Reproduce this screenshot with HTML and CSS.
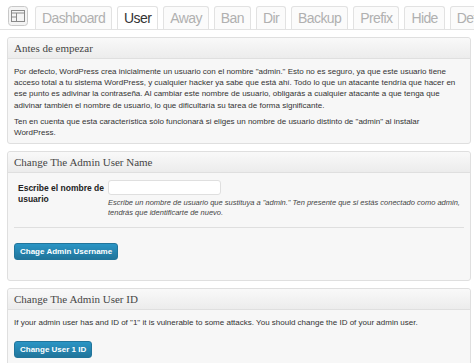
FILE: index.html
```html
<!DOCTYPE html>
<html lang="en">
<head>
    <meta charset="UTF-8">
    <title>User Settings</title>
    <link rel="stylesheet" href="styles.css">
</head>
<body>
    <div class="tabs">
        <span class="tab-icon">
            <svg width="20" height="20" viewBox="0 0 20 20">
                <rect x="0.5" y="0.5" width="19" height="19" rx="3" fill="#f4f4f4" stroke="#c8c8c8"/>
                <rect x="3.5" y="4.5" width="13" height="11" fill="none" stroke="#8a8a8a"/>
                <line x1="3.5" y1="7" x2="16.5" y2="7" stroke="#8a8a8a"/>
                <line x1="8.5" y1="7" x2="8.5" y2="15.5" stroke="#8a8a8a"/>
                <line x1="3.5" y1="11" x2="8.5" y2="11" stroke="#8a8a8a"/>
            </svg>
        </span>
        <a class="tab">Dashboard</a>
        <a class="tab active">User</a>
        <a class="tab">Away</a>
        <a class="tab">Ban</a>
        <a class="tab">Dir</a>
        <a class="tab">Backup</a>
        <a class="tab">Prefix</a>
        <a class="tab">Hide</a>
        <a class="tab">Detect</a>
    </div>

    <div class="panel">
        <h3 class="panel-title">Antes de empezar</h3>
        <div class="panel-body">
            <p>Por defecto, WordPress crea inicialmente un usuario con el nombre "admin." Esto no es seguro, ya que este usuario tiene acceso total a tu sistema WordPress, y cualquier hacker ya sabe que está ahí. Todo lo que un atacante tendría que hacer en ese punto es adivinar la contraseña. Al cambiar este nombre de usuario, obligarás a cualquier atacante a que tenga que adivinar también el nombre de usuario, lo que dificultaría su tarea de forma significante.</p>
            <p>Ten en cuenta que esta característica sólo funcionará si eliges un nombre de usuario distinto de "admin" al instalar WordPress.</p>
        </div>
    </div>

    <div class="panel">
        <h3 class="panel-title">Change The Admin User Name</h3>
        <div class="panel-body">
            <div class="form-row">
                <label class="form-label" for="newuser">Escribe el nombre de usuario</label>
                <div class="form-field">
                    <input type="text" id="newuser">
                    <p class="description">Escribe un nombre de usuario que sustituya a "admin." Ten presente que si estás conectado como admin, tendrás que identificarte de nuevo.</p>
                </div>
            </div>
            <button class="btn">Chage Admin Username</button>
        </div>
    </div>

    <div class="panel">
        <h3 class="panel-title">Change The Admin User ID</h3>
        <div class="panel-body">
            <p>If your admin user has and ID of "1" it is vulnerable to some attacks. You should change the ID of your admin user.</p>
            <button class="btn">Change User 1 ID</button>
        </div>
    </div>
</body>
</html>
```

FILE: styles.css
```css
body {
    margin: 0;
    background: #fff;
    font-family: "Liberation Sans", Arial, sans-serif;
    color: #333;
    overflow: hidden;
}
.tabs {
    display: flex;
    align-items: flex-end;
    gap: 5px;
    padding: 6px 0 0 8px;
    border-bottom: 1px solid #e2e2e2;
    white-space: nowrap;
    overflow: hidden;
}
.tab-icon {
    display: block;
    height: 20px;
    margin-right: 2px;
    align-self: flex-start;
}
.tab {
    display: block;
    padding: 2px 6px;
    border: 1px solid #e2e2e2;
    border-bottom: none;
    border-radius: 3px 3px 0 0;
    background: #fbfbfb;
    color: #b0b0b0;
    font-size: 14px;
    letter-spacing: -0.6px;
    line-height: 18px;
}
.tab.active {
    background: #fff;
    color: #333;
    margin-bottom: -1px;
    padding-bottom: 3px;
}
.panel {
    margin: 7px 3px 0 7px;
    border: 1px solid #dfdfdf;
    border-radius: 3px;
    background: #f7f7f7;
}
.panel-title {
    margin: 0;
    padding: 0 6px;
    height: 20px;
    line-height: 20px;
    font-family: "Liberation Serif", Georgia, serif;
    font-size: 11px;
    font-weight: normal;
    color: #464646;
    background: linear-gradient(to bottom, #f9f9f9, #ececec);
    border-bottom: 1px solid #dfdfdf;
    border-radius: 3px 3px 0 0;
}
.panel-body {
    padding: 7px 14px 5px 6px;
    font-size: 8px;
    line-height: 11.2px;
}
.panel-body p {
    margin: 0 0 4.7px;
}
.panel-body p:last-child {
    margin-bottom: 0;
}
.panel-body p + .btn {
    margin-top: 13px;
}
.form-row {
    display: flex;
    padding: 0 0 9px;
    border-bottom: 1px solid #dfdfdf;
    margin-bottom: 15px;
    margin-right: -8px;
}
.form-label {
    flex: none;
    box-sizing: border-box;
    width: 94px;
    padding: 3px 2px 0 4px;
    font-weight: bold;
    font-size: 8.5px;
    line-height: 11px;
    color: #222;
}
.form-field input {
    display: block;
    width: 113px;
    height: 15px;
    margin: 0;
    padding: 0 3px;
    box-sizing: border-box;
    border: 1px solid #dfdfdf;
    border-radius: 3px;
    background: #fff;
}
.form-field .description {
    margin: 3px 0 0;
    font-style: italic;
    font-size: 7.5px;
    line-height: 10px;
    color: #444;
}
.btn {
    display: block;
    height: 17px;
    padding: 0 5px;
    border: 1px solid #21759b;
    border-radius: 3px;
    background: linear-gradient(to bottom, #2a95c5, #21759b);
    color: #fff;
    font-family: "Liberation Sans", Arial, sans-serif;
    font-size: 8px;
    font-weight: bold;
    margin-bottom: 15px;
}
```
